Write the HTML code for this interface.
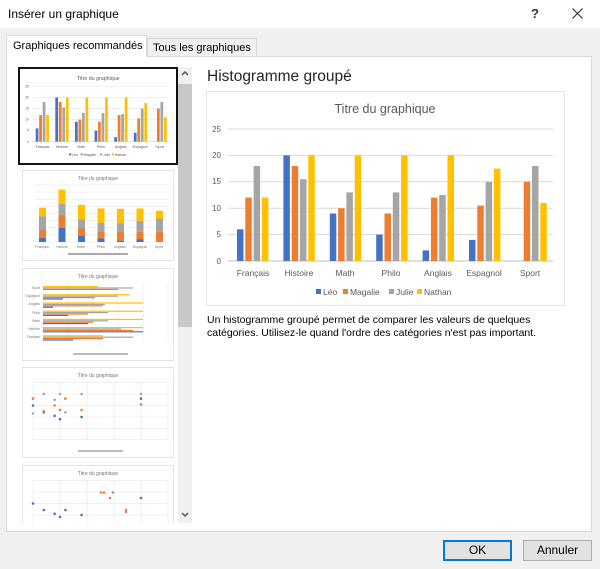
<!DOCTYPE html>
<html><head><meta charset="utf-8"><style>
*{margin:0;padding:0;box-sizing:border-box}
body{width:600px;height:569px;background:#f0f0f0;font-family:"Liberation Sans",sans-serif;position:relative;overflow:hidden;color:#000}
.abs{position:absolute}
.title{left:0;top:0;width:600px;height:28px;background:#fff}
.title span{position:absolute;left:8px;top:7px;font-size:12px}
.tab{font-size:11.5px;border:1px solid #d9d9d9;border-bottom:none;white-space:nowrap}
.panel{left:6px;top:56px;width:586px;height:476px;background:#fff;border:1px solid #d9d9d9}
.thumb{position:absolute;left:22px;width:152px;border:1px solid #e3e3e3;background:#fff}
.btn{top:540px;height:21px;width:69px;background:#e1e1e1;border:1px solid #adadad;font-size:12px;text-align:center;line-height:19px}
</style></head><body>
<div class="abs title"><span>Insérer un graphique</span>
<span style="left:531px;top:6px;font-size:13px;font-weight:bold;color:#333">?</span>
<svg class="abs" style="left:572px;top:8px" width="11" height="11"><path d="M0.5 0.5L10.5 10.5M10.5 0.5L0.5 10.5" stroke="#333" stroke-width="1.2"/></svg></div>
<div class="abs panel"></div>
<div class="abs tab" style="left:6px;top:35px;width:141px;height:22px;background:#fff;z-index:2"><span style="position:absolute;left:6px;top:4px;font-size:11px">Graphiques recommandés</span></div>
<div class="abs tab" style="left:147px;top:38px;width:110px;height:18px;background:#f0f0f0"><span style="position:absolute;left:5px;top:3px;font-size:11px">Tous les graphiques</span></div>

<svg width="0" height="0" style="position:absolute"><defs>
<g id="main">
<rect x="0" y="0" width="357" height="213" fill="#fff"/>
<text x="178" y="21" font-size="12.5" fill="#595959" text-anchor="middle" font-family="Liberation Sans">Titre du graphique</text>
<g stroke="#d9d9d9" stroke-width="1"><path d="M21 37H346M21 63.4H346M21 89.8H346M21 116.2H346M21 142.6H346"/></g>
<path d="M21 169H346" stroke="#bfbfbf"/>
<g font-size="8" fill="#595959" font-family="Liberation Sans" text-anchor="end"><text x="14" y="40">25</text><text x="14" y="66">20</text><text x="14" y="92">15</text><text x="14" y="119">10</text><text x="14" y="145">5</text><text x="14" y="172">0</text></g>
<g fill="#4472c4"><rect x="30" y="137.3" width="6.5" height="31.7"/><rect x="76.4" y="63.4" width="6.5" height="105.6"/><rect x="122.8" y="121.5" width="6.5" height="47.5"/><rect x="169.2" y="142.6" width="6.5" height="26.4"/><rect x="215.6" y="158.4" width="6.5" height="10.6"/><rect x="262" y="147.9" width="6.5" height="21.1"/></g>
<g fill="#ed7d31"><rect x="38.3" y="105.6" width="6.5" height="63.4"/><rect x="84.7" y="74" width="6.5" height="95"/><rect x="131.1" y="116.2" width="6.5" height="52.8"/><rect x="177.5" y="121.5" width="6.5" height="47.5"/><rect x="223.9" y="105.6" width="6.5" height="63.4"/><rect x="270.3" y="113.6" width="6.5" height="55.4"/><rect x="316.7" y="89.8" width="6.5" height="79.2"/></g>
<g fill="#a5a5a5"><rect x="46.6" y="74" width="6.5" height="95"/><rect x="93" y="87.2" width="6.5" height="81.8"/><rect x="139.4" y="100.4" width="6.5" height="68.6"/><rect x="185.8" y="100.4" width="6.5" height="68.6"/><rect x="232.2" y="103" width="6.5" height="66"/><rect x="278.6" y="89.8" width="6.5" height="79.2"/><rect x="325" y="74" width="6.5" height="95"/></g>
<g fill="#ffc000"><rect x="54.9" y="105.6" width="6.5" height="63.4"/><rect x="101.3" y="63.4" width="6.5" height="105.6"/><rect x="147.7" y="63.4" width="6.5" height="105.6"/><rect x="194.1" y="63.4" width="6.5" height="105.6"/><rect x="240.5" y="63.4" width="6.5" height="105.6"/><rect x="286.9" y="76.6" width="6.5" height="92.4"/><rect x="333.3" y="110.9" width="6.5" height="58.1"/></g>
<g font-size="8.5" fill="#595959" font-family="Liberation Sans" text-anchor="middle"><text x="46" y="184">Français</text><text x="92" y="184">Histoire</text><text x="138" y="184">Math</text><text x="184" y="184">Philo</text><text x="231" y="184">Anglais</text><text x="277" y="184">Espagnol</text><text x="323" y="184">Sport</text></g>
<g font-size="8.5" fill="#595959" font-family="Liberation Sans"><rect x="109" y="197" width="5" height="5" fill="#4472c4"/><text x="116" y="203">Léo</text><rect x="136" y="197" width="5" height="5" fill="#ed7d31"/><text x="143" y="203">Magalie</text><rect x="182" y="197" width="5" height="5" fill="#a5a5a5"/><text x="189" y="203">Julie</text><rect x="210" y="197" width="5" height="5" fill="#ffc000"/><text x="217" y="203">Nathan</text></g>
</g></defs></svg>

<div class="abs" style="left:207px;top:68px;font-size:15.5px;color:#262626">Histogramme groupé</div>
<svg class="abs" style="left:206px;top:91px;border:1px solid #e3e3e3" width="359" height="215" viewBox="0 0 357 213"><use href="#main"/></svg>
<div class="abs" style="left:207px;top:314px;font-size:10.5px;line-height:13px;width:352px">Un histogramme groupé permet de comparer les valeurs de quelques catégories. Utilisez-le quand l'ordre des catégories n'est pas important.</div>

<!-- list -->
<div class="abs" style="left:18px;top:67px;width:160px;height:98px;border:2.5px solid #111;background:#fff"></div>
<svg class="abs" style="left:23px;top:71px" width="151" height="89" viewBox="0 0 357 213" preserveAspectRatio="none"><use href="#main"/></svg>

<div class="thumb" style="top:170px;height:91px"><svg width="150" height="89" viewBox="0 0 150 89">
<text x="75" y="9" font-size="5" fill="#777" text-anchor="middle">Titre du graphique</text>
<g stroke="#e0e0e0" stroke-width=".5"><path d="M12 14H146M12 21H146M12 28.2H146M12 35.3H146M12 42.5H146M12 49.6H146M12 56.7H146M12 63.9H146M12 71H146"/></g>
<g fill="#4472c4"><rect x="16" y="66.7" width="7" height="4.3"/><rect x="35.5" y="56.7" width="7" height="14.3"/><rect x="55" y="64.6" width="7" height="6.4"/><rect x="74.5" y="67.4" width="7" height="3.6"/><rect x="94" y="69.6" width="7" height="1.4"/><rect x="113.5" y="68.1" width="7" height="2.9"/></g>
<g fill="#ed7d31"><rect x="16" y="58.1" width="7" height="8.6"/><rect x="35.5" y="43.9" width="7" height="12.8"/><rect x="55" y="57.5" width="7" height="7.1"/><rect x="74.5" y="61" width="7" height="6.4"/><rect x="94" y="61" width="7" height="8.6"/><rect x="113.5" y="60.6" width="7" height="7.5"/><rect x="133" y="60.3" width="7" height="10.7"/></g>
<g fill="#a5a5a5"><rect x="16" y="45.3" width="7" height="12.8"/><rect x="35.5" y="32.9" width="7" height="11"/><rect x="55" y="48.2" width="7" height="9.3"/><rect x="74.5" y="51.7" width="7" height="9.3"/><rect x="94" y="52.1" width="7" height="8.9"/><rect x="113.5" y="49.9" width="7" height="10.7"/><rect x="133" y="47.5" width="7" height="12.8"/></g>
<g fill="#ffc000"><rect x="16" y="36.7" width="7" height="8.6"/><rect x="35.5" y="18.6" width="7" height="14.3"/><rect x="55" y="33.9" width="7" height="14.3"/><rect x="74.5" y="37.4" width="7" height="14.3"/><rect x="94" y="37.8" width="7" height="14.3"/><rect x="113.5" y="37.4" width="7" height="12.5"/><rect x="133" y="39.7" width="7" height="7.8"/></g>
<g font-size="3.5" fill="#777" text-anchor="middle"><text x="19" y="77">Français</text><text x="39" y="77">Histoire</text><text x="58" y="77">Math</text><text x="78" y="77">Philo</text><text x="97" y="77">Anglais</text><text x="117" y="77">Espagnol</text><text x="136" y="77">Sport</text></g>
<g fill="#aaa"><rect x="45" y="82" width="60" height="2"/></g></svg></div>

<div class="thumb" style="top:268px;height:93px"><svg width="150" height="91" viewBox="0 0 150 91">
<text x="75" y="9" font-size="5" fill="#777" text-anchor="middle">Titre du graphique</text>
<g stroke="#e0e0e0" stroke-width=".5"><path d="M20 14V73M45 14V73M70 14V73M95 14V73M120 14V73M145 14V73"/></g>
<g><rect x="20" y="17" width="55" height="1.2" fill="#ffc000"/><rect x="20" y="18.4" width="90" height="1.2" fill="#a5a5a5"/><rect x="20" y="19.8" width="75" height="1.2" fill="#ed7d31"/>
<rect x="20" y="25.2" width="87" height="1.2" fill="#ffc000"/><rect x="20" y="26.6" width="75" height="1.2" fill="#a5a5a5"/><rect x="20" y="28" width="52" height="1.2" fill="#ed7d31"/><rect x="20" y="29.4" width="20" height="1.2" fill="#4472c4"/>
<rect x="20" y="33.4" width="100" height="1.2" fill="#ffc000"/><rect x="20" y="34.8" width="62" height="1.2" fill="#a5a5a5"/><rect x="20" y="36.2" width="60" height="1.2" fill="#ed7d31"/><rect x="20" y="37.6" width="10" height="1.2" fill="#4472c4"/>
<rect x="20" y="41.6" width="100" height="1.2" fill="#ffc000"/><rect x="20" y="43" width="65" height="1.2" fill="#a5a5a5"/><rect x="20" y="44.4" width="45" height="1.2" fill="#ed7d31"/><rect x="20" y="45.8" width="25" height="1.2" fill="#4472c4"/>
<rect x="20" y="49.8" width="100" height="1.2" fill="#ffc000"/><rect x="20" y="51.2" width="65" height="1.2" fill="#a5a5a5"/><rect x="20" y="52.6" width="50" height="1.2" fill="#ed7d31"/><rect x="20" y="54" width="45" height="1.2" fill="#4472c4"/>
<rect x="20" y="58" width="100" height="1.2" fill="#ffc000"/><rect x="20" y="59.4" width="78" height="1.2" fill="#a5a5a5"/><rect x="20" y="60.8" width="90" height="1.2" fill="#ed7d31"/><rect x="20" y="62.2" width="100" height="1.2" fill="#4472c4"/>
<rect x="20" y="66.2" width="60" height="1.2" fill="#ffc000"/><rect x="20" y="67.6" width="90" height="1.2" fill="#a5a5a5"/><rect x="20" y="69" width="60" height="1.2" fill="#ed7d31"/><rect x="20" y="70.4" width="30" height="1.2" fill="#4472c4"/></g>
<g font-size="3.5" fill="#777" text-anchor="end"><text x="17" y="20">Sport</text><text x="17" y="28">Espagnol</text><text x="17" y="36">Anglais</text><text x="17" y="45">Philo</text><text x="17" y="53">Math</text><text x="17" y="61">Histoire</text><text x="17" y="69">Français</text></g>
<rect x="50" y="84" width="55" height="2" fill="#bbb"/></svg></div>

<div class="thumb" style="top:367px;height:91px"><svg width="150" height="89" viewBox="0 0 150 89">
<text x="75" y="9" font-size="5" fill="#777" text-anchor="middle">Titre du graphique</text>
<g stroke="#e0e0e0" stroke-width=".5"><path d="M10 14.7H145M10 26H145M10 37.5H145M10 49H145M10 60.3H145M10 71.7H145M10 14V72M37 14V72M64 14V72M91 14V72M118 14V72M145 14V72"/></g>
<g fill="#4472c4"><circle cx="10" cy="37.5" r="1.3"/><circle cx="20.8" cy="44.3" r="1.3"/><circle cx="31.6" cy="47.8" r="1.3"/><circle cx="37" cy="51.2" r="1.3"/><circle cx="58.6" cy="49" r="1.3"/><circle cx="118" cy="30.6" r="1.3"/></g>
<g fill="#ed7d31"><circle cx="10" cy="30.6" r="1.3"/><circle cx="20.8" cy="43.2" r="1.3"/><circle cx="31.6" cy="37.5" r="1.3"/><circle cx="37" cy="42" r="1.3"/><circle cx="42.4" cy="30.6" r="1.3"/><circle cx="58.6" cy="42" r="1.3"/><circle cx="118" cy="36.4" r="1.3"/></g>
<g fill="#a5a5a5"><circle cx="10" cy="45.5" r="1.3"/><circle cx="20.8" cy="26" r="1.3"/><circle cx="31.6" cy="31.8" r="1.3"/><circle cx="37" cy="26" r="1.3"/><circle cx="42.4" cy="44.3" r="1.3"/><circle cx="58.6" cy="26" r="1.3"/><circle cx="118" cy="26" r="1.3"/></g>
<rect x="55" y="82" width="45" height="2" fill="#bbb"/></svg></div>

<div class="thumb" style="top:465px;height:58px;border-bottom:none;overflow:hidden"><svg width="150" height="58" viewBox="0 0 150 58">
<text x="75" y="9" font-size="5" fill="#777" text-anchor="middle">Titre du graphique</text>
<g stroke="#e0e0e0" stroke-width=".5"><path d="M10 14.7H145M10 26H145M10 37.5H145M10 49H145M10 14V58M37 14V58M64 14V58M91 14V58M118 14V58M145 14V58"/></g>
<g fill="#4472c4"><circle cx="10" cy="37.5" r="1.3"/><circle cx="20.8" cy="44" r="1.3"/><circle cx="31.6" cy="47.8" r="1.3"/><circle cx="37" cy="51" r="1.3"/><circle cx="42.4" cy="44" r="1.3"/><circle cx="58.6" cy="49" r="1.3"/><circle cx="118" cy="32" r="1.3"/></g>
<g fill="#ed7d31"><circle cx="78" cy="26.5" r="1.3"/><circle cx="81" cy="26.5" r="1.3"/><circle cx="90" cy="26.5" r="1.3"/><circle cx="87" cy="32" r="1.3"/><circle cx="103" cy="44" r="1.3"/><circle cx="103" cy="46" r="1.3"/></g></svg></div>

<!-- scrollbar -->
<div class="abs" style="left:178px;top:67px;width:14px;height:456px;background:#f0f0f0"></div>
<div class="abs" style="left:178px;top:84px;width:14px;height:243px;background:#c8c8c8"></div>
<svg class="abs" style="left:181px;top:70px" width="8" height="6"><path d="M1 5L4 2L7 5" stroke="#555" stroke-width="1.5" fill="none"/></svg>
<svg class="abs" style="left:181px;top:512px" width="8" height="6"><path d="M1 1L4 4L7 1" stroke="#555" stroke-width="1.5" fill="none"/></svg>

<div class="abs btn" style="left:443px;border:1px solid #0078d7;box-shadow:inset 0 0 0 1px #0078d7">OK</div>
<div class="abs btn" style="left:523px">Annuler</div>
</body></html>
